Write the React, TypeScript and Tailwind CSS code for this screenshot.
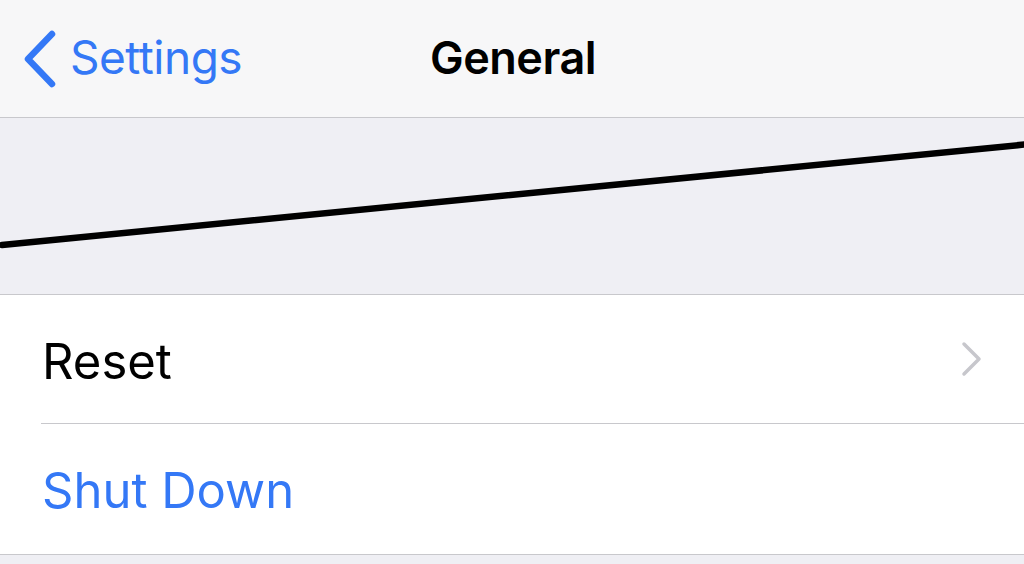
import React from 'react';

const font = { fontFamily: 'Inter, "Liberation Sans", sans-serif' };

const BackChevron = () => (
  <svg width="36" height="60" viewBox="0 0 36 60" className="shrink-0">
    <path d="M30 5 L6 30 L30 55" fill="none" stroke="#3478f6" strokeWidth="6.5" strokeLinecap="round" strokeLinejoin="round" />
  </svg>
);

const RowChevron = () => (
  <svg width="24" height="38" viewBox="0 0 24 38">
    <path d="M4 4 L19 19 L4 34" fill="none" stroke="#c7c7cc" strokeWidth="3.5" strokeLinecap="round" strokeLinejoin="round" />
  </svg>
);

export default function App() {
  return (
    <div className="w-[1024px] h-[564px] overflow-hidden bg-[#efeff4] flex flex-col" style={font}>
      {/* nav bar */}
      <div className="relative h-[118px] shrink-0 bg-[#f7f7f8] border-b border-[#c8c8cc] flex items-center">
        <div className="flex items-center pl-[22px] gap-[12px] text-[#3478f6] text-[46px] tracking-[-0.5px]">
          <BackChevron />
          <span className="leading-none pb-[4px]">Settings</span>
        </div>
        <div className="absolute inset-x-0 top-0 h-full flex items-center justify-center pointer-events-none">
          <span className="text-[45px] font-semibold text-black leading-none tracking-[-0.5px] ml-[2px] pb-[2px]">General</span>
        </div>
      </div>

      {/* gray section with line */}
      <div className="h-[177px] shrink-0 bg-[#efeff4] border-b border-[#c8c8cc]">
        <svg width="1024" height="176" viewBox="0 0 1024 176" className="block">
          <line x1="2" y1="127" x2="1030" y2="26" stroke="#000" strokeWidth="6.5" strokeLinecap="round" />
        </svg>
      </div>

      {/* list */}
      <div className="bg-white border-b border-[#c8c8cc] flex flex-col pl-[41px]">
        <div className="h-[129px] flex items-center justify-between pr-[40px] border-b border-[#c8c8cc]">
          <span className="text-[49px] text-black leading-none pl-[1px] pt-[4px]">Reset</span>
          <RowChevron />
        </div>
        <div className="h-[130px] flex items-center">
          <span className="text-[49px] text-[#3478f6] leading-none pl-[1px] pt-[2px]">Shut Down</span>
        </div>
      </div>
    </div>
  );
}
